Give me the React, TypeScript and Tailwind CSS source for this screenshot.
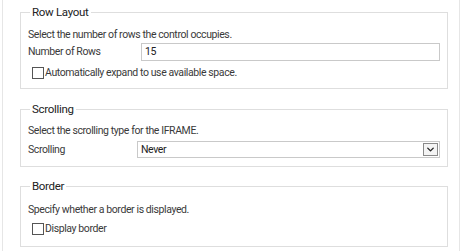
import { ChevronDown } from "lucide-react";

function Checkbox({ label }: { label: string }) {
  return (
    <label className="flex items-center h-4 pl-[4px]">
      <span className="w-[12px] h-[12px] border border-[#555] bg-white shrink-0" />
      <span className="ml-[1px]">{label}</span>
    </label>
  );
}

function Group({
  title,
  className,
  children,
}: {
  title: string;
  className?: string;
  children: React.ReactNode;
}) {
  return (
    <fieldset
      className={`w-[428px] border border-[#dedede] px-[7px] ${className ?? ""}`}
    >
      <legend className="ml-[2px] px-[2px] text-[11.5px] leading-[15px] tracking-[-0.3px] text-[#222]">
        {title}
      </legend>
      {children}
    </fieldset>
  );
}

export default function App() {
  return (
    <div
      className="w-[474px] h-[251px] bg-white overflow-hidden text-[10.5px] tracking-[-0.4px] text-[#3a3a3a]"
      style={{ fontFamily: 'Roboto, "Noto Sans", sans-serif' }}
    >
      <div className="ml-[2px] w-[458px] h-full border-x border-[#e6e6e6] pl-[17px] pt-[5px]">
        <Group title="Row Layout" className="pb-[7px]">
          <div className="mt-[7px] h-4 leading-4">
            Select the number of rows the control occupies.
          </div>
          <div className="flex items-center h-[18px]">
            <span className="w-[113px] shrink-0">Number of Rows</span>
            <div className="flex-1 h-full border border-[#c9c9c9] flex items-center pl-[3px] text-[#222]">
              15
            </div>
          </div>
          <div className="mt-[4px]">
            <Checkbox label="Automatically expand to use available space." />
          </div>
        </Group>

        <Group title="Scrolling" className="mt-[13px] pb-[8px]">
          <div className="mt-[6px] h-4 leading-4">
            Select the scrolling type for the IFRAME.
          </div>
          <div className="mt-[2px] flex items-center h-[17px]">
            <span className="w-[109px] shrink-0">Scrolling</span>
            <div className="flex-1 h-full border border-[#c9c9c9] flex items-center pl-[3px] pr-[1px] text-[#222]">
              <span className="flex-1">Never</span>
              <span className="w-[15px] h-[13px] border border-[#8a8a8a] bg-[#f4f4f4] flex items-center justify-center">
                <ChevronDown size={11} strokeWidth={3} className="text-[#222]" />
              </span>
            </div>
          </div>
        </Group>

        <Group title="Border" className="mt-[12px] pb-[9px]">
          <div className="mt-[8px] h-4 leading-4">
            Specify whether a border is displayed.
          </div>
          <div className="mt-[3px]">
            <Checkbox label="Display border" />
          </div>
        </Group>
      </div>
    </div>
  );
}
